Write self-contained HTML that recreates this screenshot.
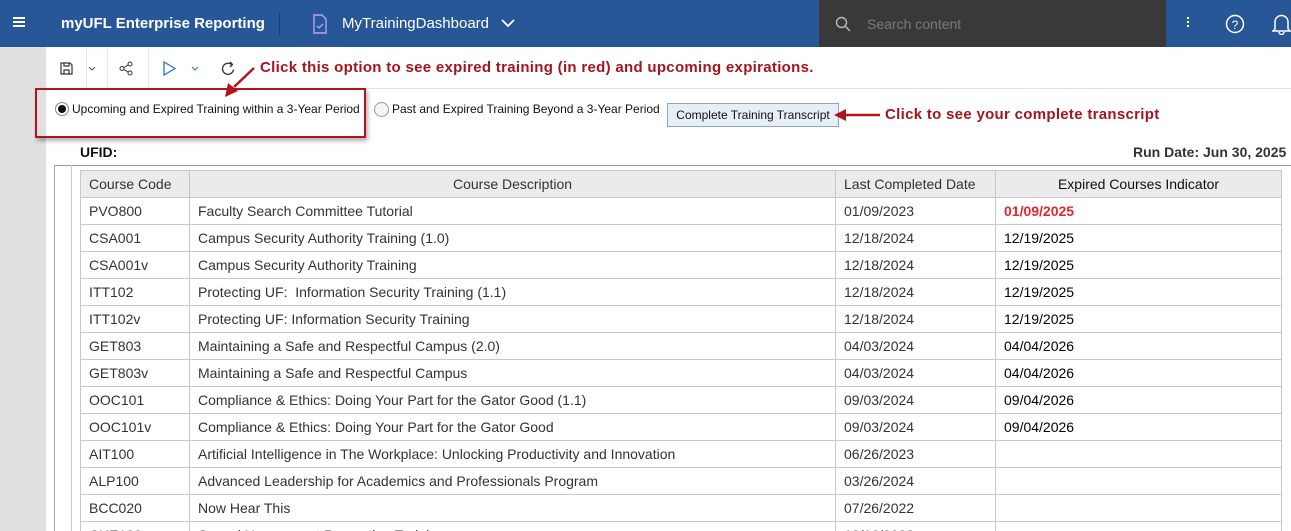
<!DOCTYPE html>
<html><head><style>
*{margin:0;padding:0;box-sizing:border-box}
html,body{width:1291px;height:531px;overflow:hidden}
body{background:#fff;font-family:"Liberation Sans",sans-serif;position:relative}
.hdr{position:absolute;left:0;top:0;width:1291px;height:47px;background:#285797;color:#fff}
.abs{position:absolute}
.left{position:absolute;left:0;top:47px;width:46px;height:484px;background:#e0e0e0}
table{position:absolute;left:80px;top:170px;border-collapse:collapse;font-size:14px;color:#333}
td{border:1px solid #c8c8c8;height:27px;padding:0 8px;white-space:nowrap}
tr.h td{background:#ebebeb;height:27px}
.red{color:#e8262b;font-weight:bold}
.b{color:#000}
.ann{color:#a4151e;font-weight:bold;font-size:15px;letter-spacing:.3px}
</style></head><body>
<div class="hdr">
 <div class="abs" style="left:13px;top:17px;width:12px;height:2px;background:#fff;box-shadow:0 4px #fff,0 8px #fff"></div>
 <div class="abs" style="left:61px;top:15px;font-size:15px;font-weight:bold">myUFL Enterprise Reporting</div>
 <div class="abs" style="left:279px;top:12px;width:1px;height:24px;background:#1a3d6e"></div>
 <svg class="abs" style="left:313px;top:14px" width="14" height="20" viewBox="0 0 14 20"><path d="M1 1h8l4 4v14H1z" fill="none" stroke="#b9a2f0" stroke-width="1.4"/><path d="M4 12l2 2 4-4" fill="none" stroke="#b9a2f0" stroke-width="1.3"/></svg>
 <div class="abs" style="left:342px;top:15px;font-size:15px">MyTrainingDashboard</div>
 <svg class="abs" style="left:501px;top:18px" width="14" height="10"><path d="M1 2l6 6 6-6" fill="none" stroke="#fff" stroke-width="1.8"/></svg>
 <div class="abs" style="left:819px;top:0;width:347px;height:47px;background:#393939"></div>
 <svg class="abs" style="left:835px;top:16px" width="16" height="16"><circle cx="6.5" cy="6.5" r="5" fill="none" stroke="#bbb" stroke-width="1.4"/><path d="M10 10l5 5" stroke="#bbb" stroke-width="1.4"/></svg>
 <div class="abs" style="left:867px;top:16px;font-size:14px;color:#7a7a7a">Search content</div>
 <div class="abs" style="left:1187px;top:17px;width:2px;height:2px;background:#fff;box-shadow:0 4px #fff,0 8px #fff"></div>
 <svg class="abs" style="left:1225px;top:14px" width="20" height="20"><circle cx="10" cy="10" r="8.5" fill="none" stroke="#fff" stroke-width="1.5"/><text x="10" y="15" font-size="12" text-anchor="middle" fill="#fff" font-family="Liberation Sans">?</text></svg>
 <svg class="abs" style="left:1272px;top:13px" width="19" height="22"><path d="M3 16V9a6.5 6.5 0 0 1 13 0v7l2 2H1z M7 19a2.5 2.5 0 0 0 5 0" fill="none" stroke="#fff" stroke-width="1.5"/></svg>
</div>
<div class="left"></div>
<div class="abs" style="left:46px;top:88px;width:1245px;height:1px;background:#e0e0e0"></div>
<div class="abs" style="left:86px;top:48px;width:1px;height:40px;background:#e8e8e8"></div>
<div class="abs" style="left:107px;top:48px;width:1px;height:40px;background:#e8e8e8"></div>
<div class="abs" style="left:148px;top:48px;width:1px;height:40px;background:#e8e8e8"></div>
<div class="abs" style="left:248px;top:48px;width:1px;height:40px;background:#e8e8e8;display:none"></div>
<svg class="abs" style="left:60px;top:62px" width="13" height="13"><path d="M1 1h9l2 2v9H1z M4 1v3h5V1 M4 12V8h5v4" fill="none" stroke="#333" stroke-width="1.2"/></svg>
<svg class="abs" style="left:88px;top:66px" width="8" height="5"><path d="M1 1l3 3 3-3" fill="none" stroke="#555"/></svg>
<svg class="abs" style="left:119px;top:61px" width="15" height="15"><circle cx="3" cy="7.5" r="2" fill="none" stroke="#333"/><circle cx="11" cy="3" r="2" fill="none" stroke="#333"/><circle cx="11" cy="12" r="2" fill="none" stroke="#333"/><path d="M5 6.5l4-2.5M5 8.5l4 2.5" stroke="#333"/></svg>
<svg class="abs" style="left:163px;top:61px" width="13" height="15"><path d="M1 1l11 6.5L1 14z" fill="none" stroke="#2f6fd8" stroke-width="1.3"/></svg>
<svg class="abs" style="left:191px;top:66px" width="8" height="5"><path d="M1 1l3 3 3-3" fill="none" stroke="#2f6fd8"/></svg>
<svg class="abs" style="left:221px;top:61px" width="15" height="16"><path d="M12.5 8.5a5.5 5.5 0 1 1-2-5" fill="none" stroke="#333" stroke-width="1.3"/><path d="M9 1l2.5 2.5L9 6" fill="none" stroke="#333" stroke-width="1.3"/></svg>
<div class="abs ann" style="left:260px;top:59px">Click this option to see expired training (in red) and upcoming expirations.</div>
<div class="abs" style="left:35px;top:88px;width:331px;height:50px;border:2px solid #b0151c;box-shadow:2px 3px 4px rgba(0,0,0,.3)"></div>
<svg class="abs" style="left:215px;top:60px" width="100" height="45"><path d="M39 8L19 27" stroke="#b0151c" stroke-width="2.5"/><path d="M10 37l3-14 10 8z" fill="#b0151c"/></svg>
<div class="abs" style="left:55px;top:102px;width:14px;height:14px;border-radius:50%;border:1px solid #888;background:#fff"><div style="margin:2px;width:8px;height:8px;border-radius:50%;background:#111"></div></div>
<div class="abs" style="left:72px;top:102px;font-size:12px;color:#111">Upcoming and Expired Training within a 3-Year Period</div>
<div class="abs" style="left:374px;top:102px;width:15px;height:15px;border-radius:50%;border:1px solid #999;background:#f4f4f4"></div>
<div class="abs" style="left:392px;top:102px;font-size:12px;color:#111">Past and Expired Training Beyond a 3-Year Period</div>
<div class="abs" style="left:667px;top:103px;width:172px;height:24px;border:1px solid #8aa7c4;background:#e8eef5;font-size:12px;color:#111;text-align:center;line-height:23px">Complete Training Transcript</div>
<svg class="abs" style="left:832px;top:107px" width="50" height="16"><path d="M10 8h38" stroke="#b0151c" stroke-width="2.5"/><path d="M2 8l12-6v12z" fill="#b0151c"/></svg>
<div class="abs ann" style="left:885px;top:106px">Click to see your complete transcript</div>
<div class="abs" style="left:80px;top:144px;font-size:14px;font-weight:bold;color:#111">UFID:</div>
<div class="abs" style="left:1133px;top:144px;font-size:14px;font-weight:bold;color:#333">Run Date: Jun 30, 2025</div>
<div class="abs" style="left:54px;top:165px;width:1237px;height:1px;background:#999"></div>
<div class="abs" style="left:54px;top:165px;width:1px;height:366px;background:#aaa"></div>
<div class="abs" style="left:71px;top:165px;width:1px;height:366px;background:#ccc"></div>
<table>
<tr class="h"><td style="width:109px">Course Code</td><td style="width:646px;text-align:center">Course Description</td><td style="width:160px">Last Completed Date</td><td style="width:286px;text-align:center;color:#111">Expired Courses Indicator</td></tr>
<tr><td>PVO800</td><td>Faculty Search Committee Tutorial</td><td>01/09/2023</td><td class="red">01/09/2025</td></tr>
<tr><td>CSA001</td><td>Campus Security Authority Training (1.0)</td><td>12/18/2024</td><td class="b">12/19/2025</td></tr>
<tr><td>CSA001v</td><td>Campus Security Authority Training</td><td>12/18/2024</td><td class="b">12/19/2025</td></tr>
<tr><td>ITT102</td><td>Protecting UF:&nbsp; Information Security Training (1.1)</td><td>12/18/2024</td><td class="b">12/19/2025</td></tr>
<tr><td>ITT102v</td><td>Protecting UF: Information Security Training</td><td>12/18/2024</td><td class="b">12/19/2025</td></tr>
<tr><td>GET803</td><td>Maintaining a Safe and Respectful Campus (2.0)</td><td>04/03/2024</td><td class="b">04/04/2026</td></tr>
<tr><td>GET803v</td><td>Maintaining a Safe and Respectful Campus</td><td>04/03/2024</td><td class="b">04/04/2026</td></tr>
<tr><td>OOC101</td><td>Compliance &amp; Ethics: Doing Your Part for the Gator Good (1.1)</td><td>09/03/2024</td><td class="b">09/04/2026</td></tr>
<tr><td>OOC101v</td><td>Compliance &amp; Ethics: Doing Your Part for the Gator Good</td><td>09/03/2024</td><td class="b">09/04/2026</td></tr>
<tr><td>AIT100</td><td>Artificial Intelligence in The Workplace: Unlocking Productivity and Innovation</td><td>06/26/2023</td><td></td></tr>
<tr><td>ALP100</td><td>Advanced Leadership for Academics and Professionals Program</td><td>03/26/2024</td><td></td></tr>
<tr><td>BCC020</td><td>Now Hear This</td><td>07/26/2022</td><td></td></tr>
<tr><td>CUE100</td><td>Sexual Harassment Prevention Training</td><td>10/16/2023</td><td></td></tr>
</table>
</body></html>
